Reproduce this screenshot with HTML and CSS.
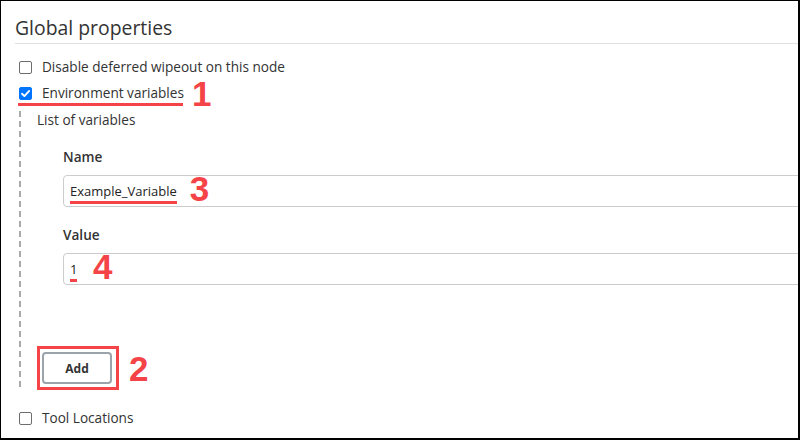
FILE: index.html
```html
<!DOCTYPE html>
<html>
<head>
<meta charset="utf-8">
<link rel="stylesheet" href="styles.css">
</head>
<body>
<div class="frame">
  <h2 class="title">Global properties</h2>
  <div class="check-row first">
    <span class="box"></span>
    <span class="label">Disable deferred wipeout on this node</span>
  </div>
  <div class="check-row">
    <span class="marked">
      <span class="box checked"><svg viewBox="0 0 13 13" width="13" height="13"><path d="M3 6.8 L5.4 9.1 L10.2 3.9" fill="none" stroke="#fff" stroke-width="1.9" stroke-linecap="round" stroke-linejoin="round"/></svg></span>
      <span class="label">Environment variables</span>
      <span class="num n1">1</span>
    </span>
  </div>
  <div class="nested">
    <div class="list-title">List of variables</div>
    <div class="entry">
      <div class="field-label">Name</div>
      <div class="input"><span class="val">Example_Variable<span class="num n3">3</span></span></div>
      <div class="field-label second">Value</div>
      <div class="input"><span class="val">1<span class="num n4">4</span></span></div>
    </div>
    <div class="add-wrap">
      <span class="red-box"><button class="add">Add</button></span>
      <span class="num n2">2</span>
    </div>
  </div>
  <div class="check-row last">
    <span class="box"></span>
    <span class="label">Tool Locations</span>
  </div>
</div>
</body>
</html>
```

FILE: styles.css
```css
html, body {
  margin: 0;
  padding: 0;
  background: #fff;
}
.frame {
  width: 800px;
  height: 440px;
  box-sizing: border-box;
  border: 1px solid #000;
  border-right-width: 2px;
  border-bottom-width: 2px;
  padding-left: 14px;
  overflow: hidden;
  font-family: "Open Sans", "Noto Sans", sans-serif;
  color: #333;
  font-size: 13.6px;
}
.title {
  margin: 0;
  padding-top: 13px;
  height: 28px;
  line-height: 28px;
  font-size: 19.4px;
  font-weight: 400;
  color: #333;
  border-bottom: 1px solid #e0e0e0;
  padding-bottom: 1px;
}
.check-row {
  display: flex;
  align-items: center;
  height: 26px;
  padding-left: 4px;
}
.check-row.first {
  margin-top: 10px;
}
.marked {
  position: relative;
  display: flex;
  align-items: center;
}
.marked::after {
  content: "";
  position: absolute;
  left: -1px;
  right: 1px;
  bottom: -4px;
  height: 3px;
  background: #f44447;
}
.box {
  width: 13px;
  height: 13px;
  box-sizing: border-box;
  border: 1px solid #6d6d6d;
  border-radius: 2px;
  background: #fff;
  margin-right: 10px;
  flex: none;
  display: flex;
}
.box.checked {
  background: #0075ff;
  border-color: #0075ff;
}
.box.checked svg {
  margin: -1px;
}
.label {
  line-height: 18px;
}
.num {
  font-family: "Liberation Sans", Arial, sans-serif;
  font-weight: 700;
  font-size: 35px;
  color: #f44447;
  position: absolute;
  line-height: 22px;
}
.n1 {
  left: 173px;
  top: -1px;
}
.nested {
  margin-left: 4px;
  margin-top: 5px;
  border-left: 2px dashed #aaa;
  padding-left: 16px;
  height: 276px;
  box-sizing: border-box;
}
.list-title {
  line-height: 18px;
}
.entry {
  padding-left: 26px;
  padding-top: 19px;
}
.field-label {
  font-weight: 600;
  line-height: 18px;
  margin-bottom: 9px;
}
.field-label.second {
  margin-top: 19px;
}
.input {
  width: 800px;
  height: 32px;
  box-sizing: border-box;
  border: 1px solid #ccc;
  border-radius: 4px;
  padding-left: 6px;
  display: flex;
  align-items: center;
}
.val {
  position: relative;
  line-height: 18px;
  color: #222;
  font-size: 13px;
}
.val::after {
  content: "";
  position: absolute;
  left: 0;
  right: 0;
  bottom: -4px;
  height: 3px;
  background: #f44447;
}
.n3 {
  left: calc(100% + 13px);
  top: -4px;
}
.n4 {
  left: 23px;
  top: -4px;
}
.add-wrap {
  position: relative;
  margin-top: 61px;
  display: flex;
}
.red-box {
  display: inline-flex;
  border: 3px solid #f44447;
  padding: 3px 4px 3px 2px;
}
.add {
  width: 70px;
  height: 32px;
  box-sizing: border-box;
  border: 2px solid #9ba3ab;
  border-radius: 4px;
  background: #fff;
  font-family: "Open Sans", "Noto Sans", sans-serif;
  font-weight: 700;
  font-size: 12px;
  color: #333;
  padding: 0;
}
.n2 {
  left: 92px;
  top: 12px;
}
.check-row.last {
  margin-top: 18px;
}
```
